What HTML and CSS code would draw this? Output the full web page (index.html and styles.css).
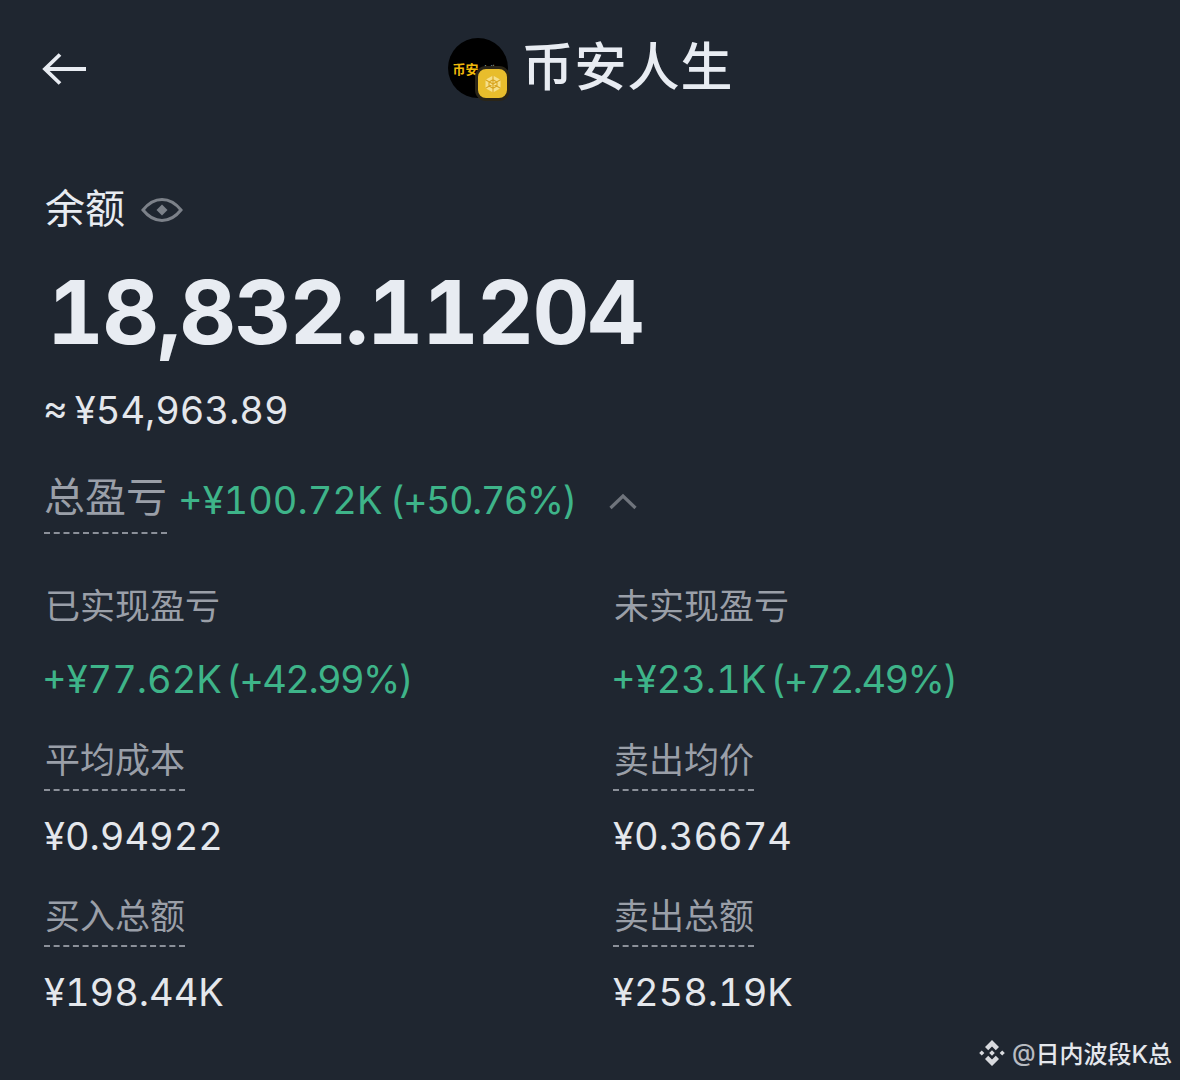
FILE: index.html
```html
<!DOCTYPE html>
<html lang="zh-CN">
<head>
  <meta charset="UTF-8" />
  <title>币安人生</title>
  <link rel="stylesheet" href="styles.css">
</head>
<body>

  <div class="page">
    <div class="header">
      <svg class="back" width="46" height="36" viewBox="0 0 46 36">
        <path d="M44 18H3M18 3.500L3 18l15 14.500" fill="none" stroke="#e8ecf2" stroke-width="3.800"/>
      </svg>
      <div class="title">
        <div class="avatar">
          <span class="avatar-text">币安</span>
          <span class="avatar-sub">人生</span>
          <span class="badge">
            <svg width="20" height="20" viewBox="0 0 20 20">
              <path d="M10 1.500l7.500 4.250v8.500L10 18.500l-7.500-4.250v-8.500z" fill="#f6e08a"/>
              <path d="M10 1.500v17M2.500 5.750l15 8.500M17.500 5.750l-15 8.500M6 8v4l4 2.300 4-2.300V8l-4-2.300z" fill="none" stroke="#d9a520" stroke-width="1.100"/>
            </svg>
          </span>
        </div>
        <h1>币安人生</h1>
      </div>
    </div>

    <div class="balance-label">
      <span>余额</span>
      <svg class="eye" width="42" height="30" viewBox="0 0 42 30">
        <path d="M2 15C8 7.500 14 4.500 21 4.500S34 7.500 40 15c-6 7.500-12 10.500-19 10.500S8 22.500 2 15z" fill="none" stroke="#7c8189" stroke-width="3"/>
        <path d="M21 9.500l5.500 5.500-5.500 5.500-5.500-5.500z" fill="#7c8189"/>
      </svg>
    </div>
    <div class="balance">18,832.11204</div>
    <div class="approx">≈ ¥54,963.89</div>

    <div class="total">
      <span class="dashed total-label">总盈亏</span>
      <span class="green total-value">+¥100.72K <span class="pct">(+50.76%)</span></span>
      <svg class="chevron" width="30" height="18" viewBox="0 0 30 18">
        <path d="M2.500 16L15 4l12.500 12" fill="none" stroke="#6f747c" stroke-width="3.200"/>
      </svg>
    </div>

    <div class="stats">
      <div class="stat pnl">
        <span class="stat-label">已实现盈亏</span>
        <span class="green stat-value">+¥77.62K <span class="pct">(+42.99%)</span></span>
      </div>
      <div class="stat pnl">
        <span class="stat-label">未实现盈亏</span>
        <span class="green stat-value">+¥23.1K <span class="pct">(+72.49%)</span></span>
      </div>
      <div class="stat">
        <span class="stat-label dashed">平均成本</span>
        <span class="stat-value">¥0.94922</span>
      </div>
      <div class="stat">
        <span class="stat-label dashed">卖出均价</span>
        <span class="stat-value">¥0.36674</span>
      </div>
      <div class="stat">
        <span class="stat-label dashed">买入总额</span>
        <span class="stat-value">¥198.44K</span>
      </div>
      <div class="stat">
        <span class="stat-label dashed">卖出总额</span>
        <span class="stat-value">¥258.19K</span>
      </div>
    </div>

    <div class="watermark">
      <svg width="28" height="28" viewBox="0 0 26 26">
        <path d="M13 1l6.500 6.500-3 3L13 7l-3.500 3.500-3-3zM13 25l-6.500-6.500 3-3L13 19l3.500-3.500 3 3zM13 10.400l2.600 2.600-2.600 2.600-2.600-2.600zM3.500 10.600L5.900 13l-2.400 2.400L1.100 13zM22.500 10.600l2.400 2.400-2.400 2.400-2.400-2.400z" fill="#d8dade"/>
      </svg>
      <span class="at">@</span>
      <span>日内波段K总</span>
    </div>
  </div>

</body>
</html>
```

FILE: styles.css
```css
body {
  margin: 0;
  background: #1f2630;
  color: #e8ecf2;
  font-family: "Inter", "Noto Sans CJK SC", sans-serif;
  font-variant-numeric: tabular-nums;
}
.page {
  position: relative;
  width: 1180px;
  height: 1080px;
  padding: 36px 44px 0;
  box-sizing: border-box;
  overflow: hidden;
}
.header {
  position: relative;
  display: flex;
  justify-content: center;
  align-items: center;
  height: 64px;
}
.back {
  position: absolute;
  left: -2px;
  top: 15px;
}
.title {
  display: flex;
  align-items: center;
  gap: 13px;
  margin-left: 2px;
}
.title h1 {
  margin: 0;
  font-size: 52px;
  font-weight: 500;
  letter-spacing: 1px;
  line-height: 60px;
}
.avatar {
  position: relative;
  display: flex;
  align-items: center;
  width: 60px;
  height: 60px;
  border-radius: 50%;
  background: #000;
  padding-left: 4px;
  box-sizing: border-box;
  font-size: 13px;
}
.avatar-text {
  color: #f0b90b;
  font-weight: 700;
}
.avatar-sub {
  margin-left: 3px;
  font-size: 8px;
  color: #ccc;
}
.badge {
  position: absolute;
  right: -2px;
  bottom: -3px;
  display: flex;
  align-items: center;
  justify-content: center;
  width: 35px;
  height: 35px;
  border-radius: 11px;
  background: #e8bd2c;
  border: 3px solid #2a2518;
  box-sizing: border-box;
}
.balance-label {
  display: flex;
  align-items: center;
  gap: 16px;
  margin-top: 78px;
  height: 56px;
  font-size: 40px;
  padding-left: 1px;
}
.eye {
  margin-top: 8px;
}
.balance {
  margin-top: 26px;
  padding-left: 3px;
  font-size: 88px;
  font-weight: 700;
  line-height: 104px;
  letter-spacing: -1.7px;
}
.approx {
  margin-top: 21px;
  margin-left: -1px;
  font-size: 38px;
  line-height: 50px;
  color: #e4e7ec;
  word-spacing: -3px;
}
.total {
  display: flex;
  align-items: flex-start;
  margin-top: 36px;
  height: 64px;
}
.total-label {
  height: 63px;
  font-size: 41px;
  line-height: 53px;
  color: #9a9fa8;
}
.total-value {
  margin-left: 11px;
  font-size: 38px;
  line-height: 58px;
  word-spacing: -3px;
}
.pct {
  letter-spacing: -1.6px;
}
.chevron {
  margin: 21px 0 0 32px;
}
.green {
  color: #3eb489;
}
.dashed {
  display: inline-block;
  box-sizing: border-box;
  border-bottom: 2px dashed #8b9099;
}
.stats {
  display: grid;
  grid-template-columns: 569px 1fr;
  margin-top: 47px;
}
.stat {
  display: flex;
  flex-direction: column;
  align-items: flex-start;
  height: 156px;
}
.stat.pnl {
  height: 154px;
}
.stat-label {
  padding-left: 1px;
  font-size: 35px;
  line-height: 48px;
  height: 50px;
  color: #9a9fa8;
}
.stat-label.dashed {
  height: 55px;
}
.stat-value {
  margin-top: 20px;
  font-size: 38px;
  line-height: 50px;
  color: #e4e7ec;
}
.stat-value.green {
  margin-top: 22px;
  margin-left: -2px;
  color: #3eb489;
  word-spacing: -6px;
}
.watermark {
  position: absolute;
  right: 8px;
  bottom: 10px;
  display: flex;
  align-items: center;
  gap: 6px;
  font-size: 24px;
  font-weight: 500;
  color: #e4e7ec;
}
.at {
  margin-right: -6px;
  color: #b8bbc0;
}
```
